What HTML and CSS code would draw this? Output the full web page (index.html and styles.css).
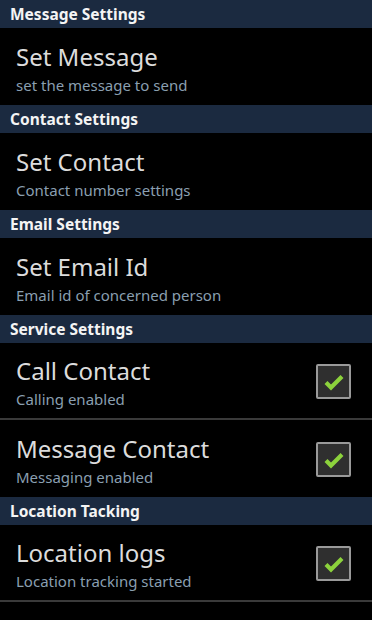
FILE: index.html
```html
<!DOCTYPE html>
<html lang="en">

<head>
    <meta charset="UTF-8">
    <meta name="viewport" content="width=device-width, initial-scale=1.0">
    <title>Settings</title>
    <link rel="stylesheet" href="styles.css">
</head>

<body>
    <div class="category">Message Settings</div>
    <div class="pref">
        <div class="pref-text">
            <div class="pref-title">Set Message</div>
            <div class="pref-summary">set the message to send</div>
        </div>
    </div>

    <div class="category">Contact Settings</div>
    <div class="pref">
        <div class="pref-text">
            <div class="pref-title">Set Contact</div>
            <div class="pref-summary">Contact number settings</div>
        </div>
    </div>

    <div class="category">Email Settings</div>
    <div class="pref">
        <div class="pref-text">
            <div class="pref-title">Set Email Id</div>
            <div class="pref-summary">Email id of concerned person</div>
        </div>
    </div>

    <div class="category">Service Settings</div>
    <div class="pref divided">
        <div class="pref-text">
            <div class="pref-title">Call Contact</div>
            <div class="pref-summary">Calling enabled</div>
        </div>
        <span class="check">
            <svg viewBox="0 0 24 24" width="24" height="24"><path d="M4 12.5l5 5L20 6.5" fill="none" stroke="#8cd23c" stroke-width="4.2" stroke-linejoin="miter"/></svg>
        </span>
    </div>
    <div class="pref">
        <div class="pref-text">
            <div class="pref-title">Message Contact</div>
            <div class="pref-summary">Messaging enabled</div>
        </div>
        <span class="check">
            <svg viewBox="0 0 24 24" width="24" height="24"><path d="M4 12.5l5 5L20 6.5" fill="none" stroke="#8cd23c" stroke-width="4.2" stroke-linejoin="miter"/></svg>
        </span>
    </div>

    <div class="category">Location Tacking</div>
    <div class="pref divided">
        <div class="pref-text">
            <div class="pref-title">Location logs</div>
            <div class="pref-summary">Location tracking started</div>
        </div>
        <span class="check">
            <svg viewBox="0 0 24 24" width="24" height="24"><path d="M4 12.5l5 5L20 6.5" fill="none" stroke="#8cd23c" stroke-width="4.2" stroke-linejoin="miter"/></svg>
        </span>
    </div>
</body>

</html>
```

FILE: styles.css
```css
body {
    margin: 0;
    background-color: #000;
    font-family: "Noto Sans", "Open Sans", sans-serif;
}

.category {
    height: 28px;
    line-height: 29px;
    padding-left: 10px;
    background-color: #1b2a40;
    color: #f4f4f4;
    font-size: 15.5px;
    font-weight: bold;
}

.pref {
    display: flex;
    align-items: center;
    height: 77px;
    padding: 2px 21px 0 16px;
    box-sizing: border-box;
}

.pref.divided {
    border-bottom: 2px solid #3a3a3a;
}

.pref-text {
    flex: 1;
}

.pref-title {
    color: #dcdcdc;
    font-size: 24px;
    line-height: 31px;
}

.pref-summary {
    margin-top: 3px;
    color: #8a9fb0;
    font-size: 15px;
    line-height: 20px;
}

.check {
    display: flex;
    align-items: center;
    justify-content: center;
    width: 31px;
    height: 31px;
    border: 2px solid #9a9a9a;
    border-radius: 2px;
    background-color: #2f2f2f;
}
```
